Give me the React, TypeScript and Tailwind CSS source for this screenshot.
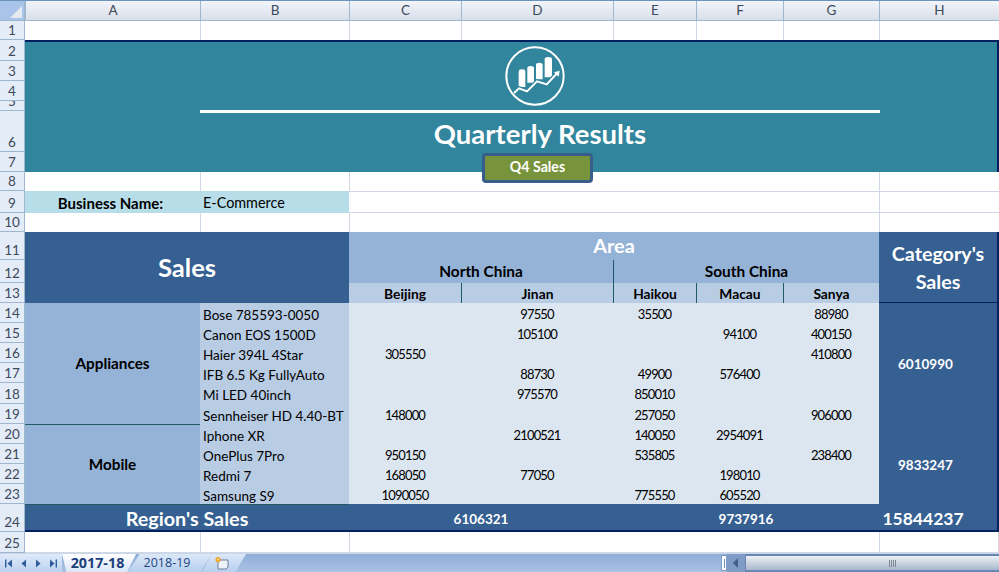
import React from "react";

const columns = ["A", "B", "C", "D", "E", "F", "G", "H"];
const rowLabels = Array.from({ length: 25 }, (_, i) => i + 1);

const products = [
  ["Bose 785593-0050", "", "97550", "35500", "", "88980"],
  ["Canon EOS 1500D", "", "105100", "", "94100", "400150"],
  ["Haier 394L 4Star", "305550", "", "", "", "410800"],
  ["IFB 6.5 Kg FullyAuto", "", "88730", "49900", "576400", ""],
  ["Mi LED 40inch", "", "975570", "850010", "", ""],
  ["Sennheiser HD 4.40-BT", "148000", "", "257050", "", "906000"],
  ["Iphone XR", "", "2100521", "140050", "2954091", ""],
  ["OnePlus 7Pro", "950150", "", "535805", "", "238400"],
  ["Redmi 7", "168050", "77050", "", "198010", ""],
  ["Samsung S9", "1090050", "", "775550", "605520", ""],
];

function ChartBadge() {
  return (
    <svg viewBox="314 45 180 180" className="w-[60px] h-[60px]" fill="none">
      <circle cx="404" cy="135" r="86" stroke="#fff" strokeWidth="6" />
      <path d="M355 168V122q0-7 10-7t10 7v46z" fill="#fff" />
      <path d="M381 155V112q0-7 10-7t10 7v43z" fill="#fff" />
      <path d="M407 145V102q0-7 10-7t10 7v43z" fill="#fff" />
      <path d="M433 139V85q0-7 11-7t11 7v54z" fill="#fff" />
      <path d="M341 186l15-14 24 9 30-30 29 9 32-34" stroke="#31859c" strokeWidth="13" />
      <path d="M341 186l15-14 24 9 30-30 29 9 32-34" stroke="#fff" strokeWidth="6" />
      <path d="M478 119l-3 18-14-13z" fill="#fff" />
    </svg>
  );
}

function NavArrow({ dir, end }: { dir: "left" | "right"; end?: boolean }) {
  return (
    <svg viewBox="0 0 9 9" className="w-[9px] h-[9px]">
      {dir === "left" ? <path d="M7 0.5v8L2.5 4.5z" fill="#2f5d9b" /> : <path d="M2 0.5v8l4.5-4z" fill="#2f5d9b" />}
      {end && (dir === "left" ? <rect x="0" y="0.5" width="1.4" height="8" fill="#2f5d9b" /> : <rect x="7.6" y="0.5" width="1.4" height="8" fill="#2f5d9b" />)}
    </svg>
  );
}

function NewSheetIcon() {
  return (
    <svg viewBox="0 0 16 14" className="w-[16px] h-[14px]">
      <path d="M4 4h10v7l-2 2H4z" fill="#eef3fa" stroke="#6f7f95" strokeWidth="1" />
      <circle cx="4" cy="3.5" r="2.6" fill="#f2a11f" />
      <circle cx="4" cy="3.5" r="1" fill="#fde9b8" />
    </svg>
  );
}

export default function App() {
  return (
    <div className="w-[999px] h-[572px] flex flex-col overflow-hidden bg-white font-[Lato,sans-serif] text-[13.5px] text-black leading-none">
      {/* Column headings */}
      <div className="grid grid-cols-[25px_175px_149px_112px_152px_83px_87px_96px_120px] h-[21px] shrink-0 border-t border-[#6b93bd]">
        <div className="bg-[#a9c4e9] border-r border-b border-[#9eb6ce] flex items-end justify-end p-[2px]">
          <svg viewBox="0 0 12 12" className="w-[12px] h-[12px]">
            <path d="M12 0v12H0z" fill="#e6e9ef" />
          </svg>
        </div>
        {columns.map((c) => (
          <div key={c} className="bg-linear-to-b from-[#f1f4f9] to-[#d9dfea] border-l border-b border-[#9eb6ce] first:border-l-0 flex items-center justify-center text-[#3d4a5c] text-[13.5px]">
            {c}
          </div>
        ))}
      </div>

      <div className="flex h-[532px] shrink-0">
        {/* Row headings */}
        <div className="w-[25px] shrink-0 grid grid-rows-[19px_21px_20px_20px_10px_41px_20px_19px_22px_19px_28px_23px_20px_20px_20px_20px_20px_21px_20px_20px_20px_20px_20px_28px_21px]">
          {rowLabels.map((n) => (
            <div key={n} className="bg-[#e4ecf7] border-r border-b border-[#9eb6ce] flex items-end justify-center pb-[2px] overflow-hidden text-[#3d4a5c] text-[13.5px]">
              {n}
            </div>
          ))}
        </div>

        {/* Sheet cells */}
        <div className="w-[974px] grid grid-cols-[175px_149px_112px_152px_83px_87px_96px_120px] grid-rows-[19px_21px_20px_20px_10px_41px_20px_19px_22px_19px_28px_23px_20px_201px_28px_21px]">
          {/* Row 1 */}
          {columns.map((c) => (
            <div key={c} className="border-l border-[#d0d7e5] first:border-l-0 last:border-r" />
          ))}

          {/* Banner */}
          <div className="col-span-8 row-span-6 bg-[#31859c] border-t-2 border-r-2 border-[#002060] pl-[175px] pr-[117px] flex flex-col items-center">
            <div className="mt-[4px] mr-[11px]">
              <ChartBadge />
            </div>
            <div className="w-full h-[3px] bg-white mt-[4px] shrink-0" />
            <div className="mt-[6px] text-[27.5px] font-bold text-white leading-[30px]">Quarterly Results</div>
            <div className="relative z-10 mt-[4px] mr-[5px] w-[111px] h-[30px] shrink-0 rounded-[4px] border-[3px] border-[#385d8a] bg-[#77933c] text-white text-[14.2px] font-bold pb-[2px] flex items-center justify-center">
              Q4 Sales
            </div>
          </div>

          {/* Row 8 */}
          <div />
          <div className="border-l border-[#d0d7e5]" />
          <div className="col-span-5 border-l border-[#d0d7e5]" />
          <div className="border-l border-[#d0d7e5]" />

          {/* Row 9 */}
          <div className="bg-[#b7dee8] flex items-center justify-center pr-[4px] pt-[2px] text-[15px] font-bold">Business Name:</div>
          <div className="bg-[#b7dee8] flex items-center pl-[3px] pt-[2px] text-[14.4px]">E-Commerce</div>
          <div className="col-span-5 border-y border-[#d0d7e5]" />
          <div className="border-y border-l border-[#d0d7e5]" />

          {/* Row 10 */}
          <div />
          <div className="border-l border-[#d0d7e5]" />
          <div className="col-span-5 border-l border-[#d0d7e5]" />
          <div className="border-l border-[#d0d7e5]" />

          {/* Table headings */}
          <div className="col-span-2 row-span-3 bg-[#366092] text-white font-bold text-[25.6px] flex items-center justify-center">Sales</div>
          <div className="col-span-5 bg-[#95b3d7] text-white font-bold text-[19.9px] flex items-center justify-center">Area</div>
          <div className="row-span-3 bg-[#366092] border-b border-r-2 border-[#002060] text-white font-bold text-[19.7px] leading-[28px] pt-[2px] flex items-center justify-center text-center">
            Category's
            <br />
            Sales
          </div>
          <div className="col-span-2 bg-[#95b3d7] font-bold text-[15.4px] flex items-center justify-center">North China</div>
          <div className="col-span-3 bg-[#95b3d7] border-l border-[#215967] font-bold text-[15.4px] flex items-center justify-center">South China</div>
          <div className="bg-[#b8cce4] font-bold text-[13.8px] pt-[2px] flex items-center justify-center">Beijing</div>
          <div className="bg-[#b8cce4] border-l border-[#215967] font-bold text-[13.8px] pt-[2px] flex items-center justify-center">Jinan</div>
          <div className="bg-[#b8cce4] border-l border-[#215967] font-bold text-[13.8px] pt-[2px] flex items-center justify-center">Haikou</div>
          <div className="bg-[#b8cce4] border-l border-[#215967] font-bold text-[13.8px] pt-[2px] flex items-center justify-center">Macau</div>
          <div className="bg-[#b8cce4] border-l border-[#215967] font-bold text-[13.8px] pt-[2px] flex items-center justify-center">Sanya</div>

          {/* Rows 14-23 */}
          <div className="grid grid-rows-[121px_80px]">
            <div className="bg-[#95b3d7] font-bold text-[15.3px] flex items-center justify-center">Appliances</div>
            <div className="bg-[#95b3d7] border-t border-[#215967] font-bold text-[15.3px] flex items-center justify-center">Mobile</div>
          </div>
          <div className="col-span-6 grid grid-cols-[149px_112px_152px_83px_87px_96px] grid-rows-[20px_20px_20px_20px_21px_20px_20px_20px_20px_20px] bg-[#dce6f1]">
            {products.map((row) =>
              row.map((value, i) =>
                i === 0 ? (
                  <div key={row[0]} className="bg-[#b8cce4] flex items-center pl-[3px] pt-[5px]">
                    {value}
                  </div>
                ) : (
                  <div key={row[0] + i} className="flex items-center justify-center pt-[2px] text-[13px] tracking-[-0.85px]">
                    {value}
                  </div>
                )
              )
            )}
          </div>
          <div className="grid grid-rows-[121px_80px] bg-[#366092] border-r-2 border-[#002060] text-white font-bold">
            <div className="flex items-center pl-[19px] pt-[2px]">6010990</div>
            <div className="flex items-center pl-[19px] pt-[3px]">9833247</div>
          </div>

          {/* Row 24 */}
          <div className="col-span-8 grid grid-cols-[324px_264px_266px_120px] bg-[#366092] border-b-2 border-r-2 border-[#002060] text-white font-bold">
            <div className="flex items-center justify-center text-[19.8px] pt-[2px] border-t border-[#215967]">Region's Sales</div>
            <div className="flex items-center justify-center pt-[5px]">6106321</div>
            <div className="flex items-center justify-center pt-[5px]">9737916</div>
            <div className="flex items-center justify-center text-[17.5px] pr-[32px] pt-[4px]">15844237</div>
          </div>

          {/* Row 25 */}
          <div className="border-b border-[#d0d7e5]" />
          <div className="border-l border-b border-[#d0d7e5]" />
          <div className="col-span-5 border-l border-b border-[#d0d7e5]" />
          <div className="border-l border-r border-b border-[#d0d7e5]" />
        </div>
      </div>

      {/* Sheet tabs and scroll bar */}
      <div className="flex-1 flex items-stretch bg-linear-to-b from-[#8fadd6] to-[#a9c3e6] border-t border-[#c9d6ea]">
        <div className="w-[62px] shrink-0 flex items-center justify-between px-[5px] bg-linear-to-b from-[#dfeafa] to-[#bcd2ef]">
          <NavArrow dir="left" end />
          <NavArrow dir="left" />
          <NavArrow dir="right" />
          <NavArrow dir="right" end />
        </div>
        <div className="w-[74px] shrink-0 flex items-center justify-center pr-[3px] bg-linear-to-b from-white to-[#dbe7f7] [clip-path:polygon(0_0,100%_0,88%_100%,6%_100%)] font-bold text-[#1c3f7a] font-['Open_Sans',sans-serif] text-[14.3px]">
          2017-18
        </div>
        <div className="-ml-[8px] w-[84px] shrink-0 flex items-center justify-center pr-[6px] bg-linear-to-b from-[#dce8f8] to-[#b7cfee] [clip-path:polygon(14%_0,100%_0,86%_100%,0_100%)] text-[#23467f] font-['Open_Sans',sans-serif] text-[12.5px]">
          2018-19
        </div>
        <div className="-ml-[10px] w-[44px] shrink-0 flex items-center justify-center pr-[4px] bg-linear-to-b from-[#dce8f8] to-[#b7cfee] [clip-path:polygon(22%_0,100%_0,76%_100%,0_100%)]">
          <NewSheetIcon />
        </div>
        <div className="flex-1" />
        <div className="w-[6px] shrink-0 my-[1px] bg-white border border-[#7f9cc6] flex items-center justify-center">
          <div className="w-[1px] h-[9px] bg-[#6f8bb5]" />
        </div>
        <div className="w-[18px] shrink-0 bg-[#7f9cc6] flex items-center justify-center">
          <svg viewBox="0 0 6 10" className="w-[6px] h-[10px]">
            <path d="M5 0v10L0 5z" fill="#3f5f8f" />
          </svg>
        </div>
        <div className="w-[254px] shrink-0 pl-[143px] flex items-center bg-linear-to-b from-[#eef1f6] to-[#a9b7cc] border-y-2 border-l border-[#6a86b3]">
          <div className="w-[8px] h-[7px] bg-[repeating-linear-gradient(90deg,#7c8794_0_1px,transparent_1px_2px)]" />
        </div>
      </div>
    </div>
  );
}
